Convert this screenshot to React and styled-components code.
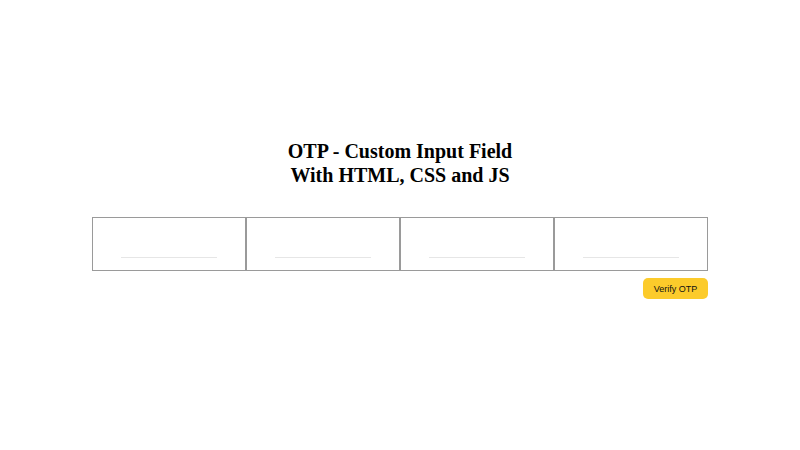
import React from 'react';
import styled, { createGlobalStyle } from 'styled-components';

const GlobalStyle = createGlobalStyle`
  html, body {
    margin: 0;
    padding: 0;
    background: #ffffff;
  }
`;

export default function App() {
  return <Page>
    <GlobalStyle />
    <Title>OTP - Custom Input Field<br />With HTML, CSS and JS</Title>
    <Form>
      <InputRow>
        {[0, 1, 2, 3].map(i => <Cell key={i}><OtpInput type="text" maxLength={1} /></Cell>)}
      </InputRow>
      <Actions>
        <VerifyBtn>Verify OTP</VerifyBtn>
      </Actions>
    </Form>
  </Page>
}

const Page = styled.div`
  display: flex;
  flex-direction: column;
  align-items: center;
  padding-top: 139px;
  font-family: "Liberation Serif", "Times New Roman", serif;
`

const Title = styled.h1`
  margin: 0;
  font-size: 20px;
  line-height: 24px;
  font-weight: bold;
  text-align: center;
  color: #000;
`

const Form = styled.div`
  width: 616px;
  margin-top: 30px;
  display: flex;
  flex-direction: column;
`

const InputRow = styled.div`
  display: flex;
`

const Cell = styled.div`
  position: relative;
  flex: 1;
  height: 54px;
  box-sizing: border-box;
  border: 1px solid #9a9a9a;

  &::after {
    content: "";
    position: absolute;
    left: 28px;
    right: 28px;
    bottom: 12px;
    height: 1px;
    background: #e6e6e6;
  }
`

const OtpInput = styled.input`
  width: 100%;
  height: 100%;
  box-sizing: border-box;
  border: none;
  outline: none;
  background: transparent;
  text-align: center;
  font-size: 20px;
`

const Actions = styled.div`
  display: flex;
  justify-content: flex-end;
  margin-top: 7px;
`

const VerifyBtn = styled.button`
  width: 65px;
  height: 21px;
  padding: 0;
  border: none;
  border-radius: 5px;
  background: #fccb2b;
  color: #111;
  font-family: "Liberation Sans", Arial, sans-serif;
  font-size: 9px;
  cursor: pointer;
`
